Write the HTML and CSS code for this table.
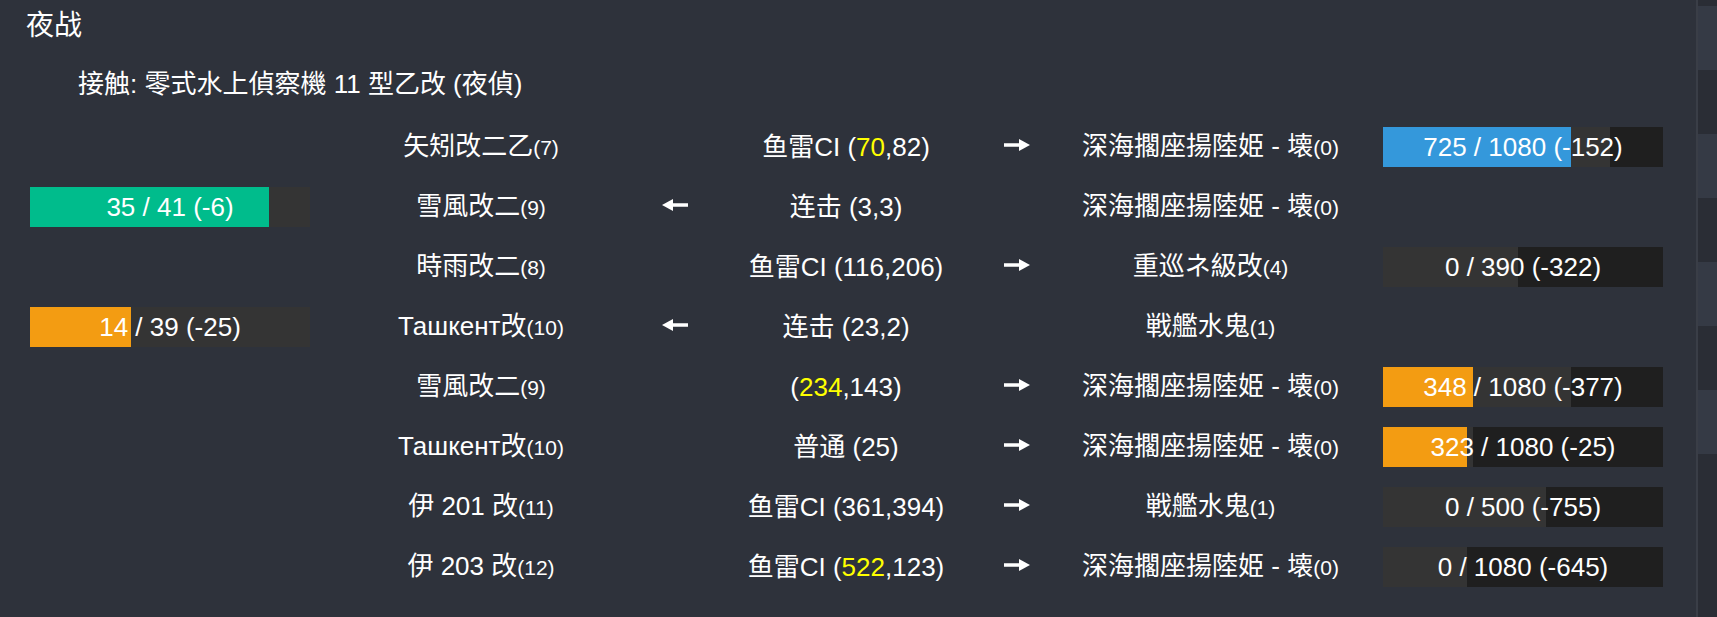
FILE: index.html
```html
<!DOCTYPE html>
<html lang="zh">
<head>
<meta charset="utf-8">
<title>夜战</title>
<link rel="stylesheet" href="styles.css">
</head>
<body>
<div class="screen">
  <main class="panel">
    <h2 class="title">夜战</h2>
    <div class="contact">接触: 零式水上偵察機 11 型乙改 (夜偵)</div>
    <div class="battle">
      <!-- row 1 -->
      <div class="cell"></div>
      <div class="cell name">矢矧改二乙<span class="sub">(7)</span></div>
      <div class="cell"></div>
      <div class="cell atk">鱼雷CI (<span class="hi">70</span>,82)</div>
      <div class="cell"><svg class="arrow" viewBox="0 0 26 12"><rect x="0" y="4.25" width="18" height="3.5"/><polygon points="26,6 15,0 15,12"/></svg></div>
      <div class="cell name">深海擱座揚陸姫 - 壊<span class="sub">(0)</span></div>
      <div class="bar"><div class="prev" style="width:81.2%"></div><div class="cur blue" style="width:67.13%"></div><span class="bar-label">725 / 1080 (-152)</span></div>

      <!-- row 2 -->
      <div class="bar"><div class="prev" style="width:100%"></div><div class="cur green" style="width:85.37%"></div><span class="bar-label">35 / 41 (-6)</span></div>
      <div class="cell name">雪風改二<span class="sub">(9)</span></div>
      <div class="cell"><svg class="arrow" viewBox="0 0 26 12"><rect x="8" y="4.25" width="18" height="3.5"/><polygon points="0,6 11,0 11,12"/></svg></div>
      <div class="cell atk">连击 (3,3)</div>
      <div class="cell"></div>
      <div class="cell name">深海擱座揚陸姫 - 壊<span class="sub">(0)</span></div>
      <div class="cell"></div>

      <!-- row 3 -->
      <div class="cell"></div>
      <div class="cell name">時雨改二<span class="sub">(8)</span></div>
      <div class="cell"></div>
      <div class="cell atk">鱼雷CI (116,206)</div>
      <div class="cell"><svg class="arrow" viewBox="0 0 26 12"><rect x="0" y="4.25" width="18" height="3.5"/><polygon points="26,6 15,0 15,12"/></svg></div>
      <div class="cell name">重巡ネ級改<span class="sub">(4)</span></div>
      <div class="bar"><div class="prev" style="width:48.2%"></div><div class="cur" style="width:0%"></div><span class="bar-label">0 / 390 (-322)</span></div>

      <!-- row 4 -->
      <div class="bar"><div class="prev" style="width:100%"></div><div class="cur orange" style="width:35.9%"></div><span class="bar-label">14 / 39 (-25)</span></div>
      <div class="cell name">Ташкент改<span class="sub">(10)</span></div>
      <div class="cell"><svg class="arrow" viewBox="0 0 26 12"><rect x="8" y="4.25" width="18" height="3.5"/><polygon points="0,6 11,0 11,12"/></svg></div>
      <div class="cell atk">连击 (23,2)</div>
      <div class="cell"></div>
      <div class="cell name">戦艦水鬼<span class="sub">(1)</span></div>
      <div class="cell"></div>

      <!-- row 5 -->
      <div class="cell"></div>
      <div class="cell name">雪風改二<span class="sub">(9)</span></div>
      <div class="cell"></div>
      <div class="cell atk">(<span class="hi">234</span>,143)</div>
      <div class="cell"><svg class="arrow" viewBox="0 0 26 12"><rect x="0" y="4.25" width="18" height="3.5"/><polygon points="26,6 15,0 15,12"/></svg></div>
      <div class="cell name">深海擱座揚陸姫 - 壊<span class="sub">(0)</span></div>
      <div class="bar"><div class="prev" style="width:67.13%"></div><div class="cur orange" style="width:32.22%"></div><span class="bar-label">348 / 1080 (-377)</span></div>

      <!-- row 6 -->
      <div class="cell"></div>
      <div class="cell name">Ташкент改<span class="sub">(10)</span></div>
      <div class="cell"></div>
      <div class="cell atk">普通 (25)</div>
      <div class="cell"><svg class="arrow" viewBox="0 0 26 12"><rect x="0" y="4.25" width="18" height="3.5"/><polygon points="26,6 15,0 15,12"/></svg></div>
      <div class="cell name">深海擱座揚陸姫 - 壊<span class="sub">(0)</span></div>
      <div class="bar"><div class="prev" style="width:32.22%"></div><div class="cur orange" style="width:29.91%"></div><span class="bar-label">323 / 1080 (-25)</span></div>

      <!-- row 7 -->
      <div class="cell"></div>
      <div class="cell name">伊 201 改<span class="sub">(11)</span></div>
      <div class="cell"></div>
      <div class="cell atk">鱼雷CI (361,394)</div>
      <div class="cell"><svg class="arrow" viewBox="0 0 26 12"><rect x="0" y="4.25" width="18" height="3.5"/><polygon points="26,6 15,0 15,12"/></svg></div>
      <div class="cell name">戦艦水鬼<span class="sub">(1)</span></div>
      <div class="bar"><div class="prev" style="width:58.2%"></div><div class="cur" style="width:0%"></div><span class="bar-label">0 / 500 (-755)</span></div>

      <!-- row 8 -->
      <div class="cell"></div>
      <div class="cell name">伊 203 改<span class="sub">(12)</span></div>
      <div class="cell"></div>
      <div class="cell atk">鱼雷CI (<span class="hi">522</span>,123)</div>
      <div class="cell"><svg class="arrow" viewBox="0 0 26 12"><rect x="0" y="4.25" width="18" height="3.5"/><polygon points="26,6 15,0 15,12"/></svg></div>
      <div class="cell name">深海擱座揚陸姫 - 壊<span class="sub">(0)</span></div>
      <div class="bar"><div class="prev" style="width:29.91%"></div><div class="cur" style="width:0%"></div><span class="bar-label">0 / 1080 (-645)</span></div>
    </div>
  </main>
  <div class="divider"></div>
  <aside class="side">
    <div class="stripe light"></div>
    <div class="stripe"></div>
    <div class="stripe light"></div>
    <div class="stripe"></div>
    <div class="stripe light"></div>
    <div class="stripe"></div>
    <div class="stripe light"></div>
  </aside>
</div>
</body>
</html>
```

FILE: styles.css
```css
html, body {
  margin: 0;
  padding: 0;
}

body {
  background: #2e323b;
  color: #ffffff;
  font-family: "Liberation Sans", "Noto Sans CJK SC", sans-serif;
}

.screen {
  display: flex;
  height: 617px;
  overflow: hidden;
}

.panel {
  flex: 1;
  padding-left: 26px;
  min-width: 0;
}

.divider {
  width: 2px;
  background: #3a3e47;
}

.side {
  width: 19px;
  background: #2a2d35;
  padding-top: 6px;
  display: flex;
  flex-direction: column;
}

.stripe {
  height: 64px;
  flex: none;
}

.stripe.light {
  background: #353a45;
}

.title {
  margin: 0;
  padding-top: 2px;
  font-size: 28px;
  font-weight: normal;
  line-height: 48px;
}

.contact {
  margin: 14px 0 0 52px;
  font-size: 26px;
  line-height: 40px;
}

.battle {
  display: grid;
  grid-template-columns: 280px 342px 45px 298px 43px 345px 280px;
  grid-auto-rows: 60px;
  align-items: center;
  justify-items: center;
  margin: 13px 0 0 4px;
  font-size: 26px;
}

.cell {
  line-height: 32px;
  white-space: nowrap;
}

.sub {
  font-size: 21px;
}

.hi {
  color: #ffff00;
}

.arrow {
  display: block;
  width: 26px;
  height: 12px;
  fill: #ffffff;
  margin-bottom: 4px;
}

.bar {
  position: relative;
  width: 280px;
  height: 40px;
  background: #1f1f1f;
  display: flex;
  align-items: center;
  justify-content: center;
  overflow: hidden;
}

.bar .prev,
.bar .cur {
  position: absolute;
  left: 0;
  top: 0;
  bottom: 0;
}

.bar .prev {
  background: #343434;
}

.cur.blue {
  background: #3498db;
}

.cur.green {
  background: #00bc8c;
}

.cur.orange {
  background: #f39c12;
}

.bar-label {
  position: relative;
  font-size: 26px;
  line-height: 40px;
  white-space: nowrap;
}
```
